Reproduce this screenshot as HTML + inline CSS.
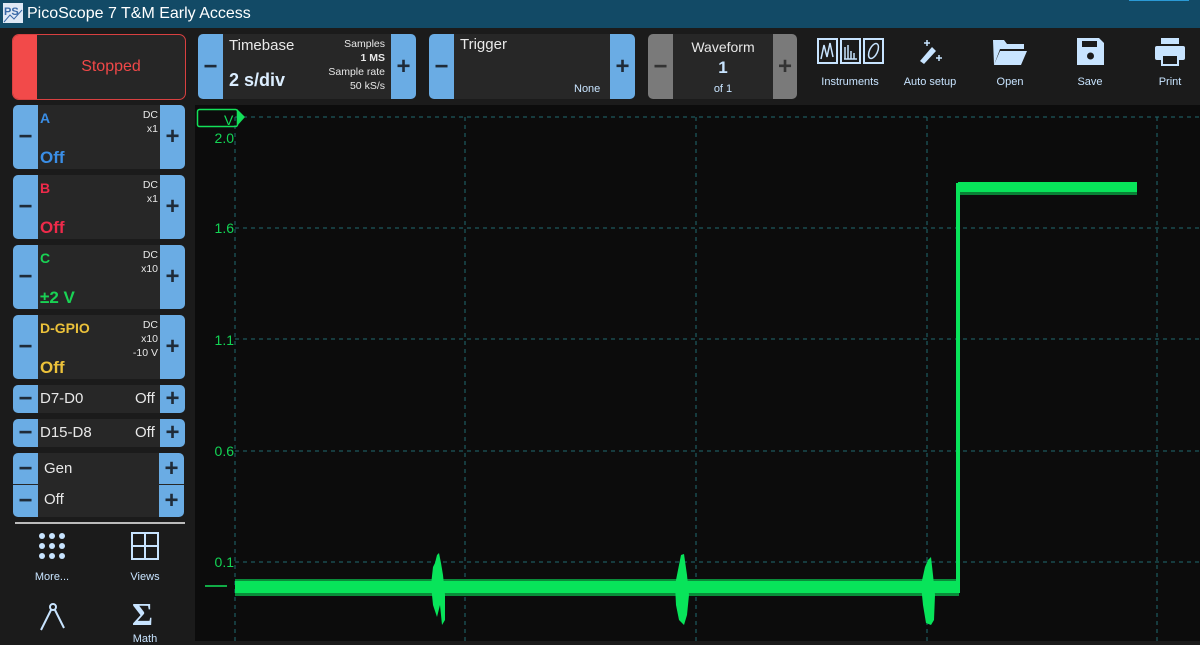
<!DOCTYPE html>
<html><head><meta charset="utf-8"><style>
*{box-sizing:border-box;margin:0;padding:0}
body{width:1200px;height:641px;overflow:hidden;background:#1b1b1b;font-family:"Liberation Sans",sans-serif;color:#e8e8e8;position:relative}
.a{position:absolute}
.title{left:0;top:0;width:1200px;height:28px;background:#124a66}
.btn{position:absolute;background:#6aace4;color:#1f2b38;display:flex;align-items:center;justify-content:center;font-size:24px;font-weight:bold}
.card{position:absolute;background:#272727;border-radius:5px;overflow:hidden}
.lbl{position:absolute;font-size:11px;color:#c8e4ff;text-align:center}
</style></head><body>
<div class="a title"></div>
<div class="a" style="left:1129px;top:0;width:60px;height:1px;background:#2a9ad6"></div>
<svg class="a" style="left:2px;top:2px" width="22" height="22"><rect x="1" y="1" width="20" height="20" fill="#dfe9f5"/><text x="2" y="13" font-size="11" font-weight="bold" fill="#3a6aa8" font-family="Liberation Sans">PS</text><path d="M2 20 L8 13 L12 17 L20 8" stroke="#3a6aa8" fill="none"/></svg>
<div class="a" style="left:27px;top:5px;font-size:16px;color:#fff">PicoScope 7 T&amp;M Early Access</div>

<div class="a" style="left:12px;top:34px;width:174px;height:66px;border:1px solid #d84040;border-radius:7px;background:#262626;overflow:hidden">
<div class="a" style="left:0;top:0;width:24px;height:64px;background:#f24a4a"></div>
<div class="a" style="left:24px;top:23px;width:148px;text-align:center;color:#f04848;font-size:16px">Stopped</div></div>

<div class="card" style="left:198px;top:34px;width:218px;height:65px">
<div class="btn" style="left:0;top:0;width:25px;height:65px">−</div>
<div class="btn" style="left:193px;top:0;width:25px;height:65px">+</div>
<div class="a" style="left:31px;top:3px;font-size:15px">Timebase</div>
<div class="a" style="left:31px;top:36px;font-size:18px;font-weight:bold;color:#dceeff">2 s/div</div>
<div class="a" style="left:110px;top:3px;width:77px;text-align:right;font-size:10.5px;line-height:14px">Samples<br><b>1 MS</b><br>Sample rate<br>50 kS/s</div></div>

<div class="card" style="left:429px;top:34px;width:206px;height:65px">
<div class="btn" style="left:0;top:0;width:25px;height:65px">−</div>
<div class="btn" style="left:181px;top:0;width:25px;height:65px">+</div>
<div class="a" style="left:31px;top:2px;font-size:15px">Trigger</div>
<div class="a" style="left:145px;top:49px;font-size:11px;color:#c8e4ff">None</div></div>

<div class="card" style="left:648px;top:34px;width:149px;height:65px">
<div class="btn" style="left:0;top:0;width:25px;height:65px;background:#7a7a7a;color:#333">−</div>
<div class="btn" style="left:125px;top:0;width:24px;height:65px;background:#7a7a7a;color:#333">+</div>
<div class="a" style="left:25px;top:5px;width:100px;text-align:center;font-size:14px">Waveform</div>
<div class="a" style="left:25px;top:24px;width:100px;text-align:center;font-size:17px;font-weight:bold;color:#c8e4ff">1</div>
<div class="a" style="left:25px;top:49px;width:100px;text-align:center;font-size:11px;color:#c8e4ff">of 1</div></div>

<svg class="a" style="left:817px;top:37px" width="68" height="30" fill="none" stroke="#c8e4ff" stroke-width="2">
<rect x="1" y="2" width="19" height="24"/><rect x="24" y="2" width="19" height="24"/><rect x="47" y="2" width="19" height="24"/>
<path d="M4 22 L7 8 L10 20 L13 6 L16 20" stroke-width="1.5"/><path d="M28 22 V10 M31 22 V8 M34 22 V14 M37 22 V16 M27 22 H40" stroke-width="1.5"/><ellipse cx="56.5" cy="14" rx="4" ry="8" transform="rotate(25 56.5 14)" stroke-width="1.5"/></svg>
<div class="lbl" style="left:810px;top:76px;width:80px">Instruments</div>
<svg class="a" style="left:915px;top:38px" width="30" height="30"><path d="M7 26 L19 12 L23 16 L11 29 Z" fill="#c8e4ff" transform="translate(-2,-3)"/><path d="M12 2 V8 M9 5 H15 M24 17 V23 M21 20 H27" stroke="#c8e4ff" stroke-width="1.5"/></svg>
<div class="lbl" style="left:890px;top:76px;width:80px">Auto setup</div>
<svg class="a" style="left:992px;top:37px" width="36" height="30"><path d="M1 3 H12 L15 7 H32 V12 H8 L2 28 Z M8 14 H35 L29 28 H2 Z" fill="#c8e4ff"/></svg>
<div class="lbl" style="left:970px;top:76px;width:80px">Open</div>
<svg class="a" style="left:1076px;top:37px" width="30" height="30"><path d="M1 1 H23 L28 6 V28 H1 Z" fill="#c8e4ff"/><rect x="6" y="4" width="15" height="6" fill="#1b1b1b"/><circle cx="14.5" cy="19" r="3.5" fill="#1b1b1b"/></svg>
<div class="lbl" style="left:1050px;top:76px;width:80px">Save</div>
<svg class="a" style="left:1154px;top:37px" width="32" height="30"><rect x="7" y="1" width="18" height="6" fill="#c8e4ff"/><rect x="1" y="9" width="30" height="14" rx="2" fill="#c8e4ff"/><rect x="8" y="18" width="16" height="10" fill="#1b1b1b" stroke="#c8e4ff" stroke-width="2"/></svg>
<div class="lbl" style="left:1130px;top:76px;width:80px">Print</div>

<div class="card" style="left:13px;top:105px;width:172px;height:64px"><div class="btn" style="left:0;top:0;width:25px;height:64px">−</div><div class="btn" style="left:147px;top:0;width:25px;height:64px">+</div>
<div class="a" style="left:27px;top:5px;font-size:14px;font-weight:bold;color:#3a8ee6">A</div><div class="a" style="left:27px;top:43px;font-size:17px;font-weight:bold;color:#3a8ee6">Off</div><div class="a" style="left:110px;top:3px;width:35px;text-align:right;font-size:10.5px;line-height:14px">DC<br>x1</div></div>
<div class="card" style="left:13px;top:175px;width:172px;height:64px"><div class="btn" style="left:0;top:0;width:25px;height:64px">−</div><div class="btn" style="left:147px;top:0;width:25px;height:64px">+</div>
<div class="a" style="left:27px;top:5px;font-size:14px;font-weight:bold;color:#ee2a4a">B</div><div class="a" style="left:27px;top:43px;font-size:17px;font-weight:bold;color:#ee2a4a">Off</div><div class="a" style="left:110px;top:3px;width:35px;text-align:right;font-size:10.5px;line-height:14px">DC<br>x1</div></div>
<div class="card" style="left:13px;top:245px;width:172px;height:64px"><div class="btn" style="left:0;top:0;width:25px;height:64px">−</div><div class="btn" style="left:147px;top:0;width:25px;height:64px">+</div>
<div class="a" style="left:27px;top:5px;font-size:14px;font-weight:bold;color:#19d254">C</div><div class="a" style="left:27px;top:43px;font-size:17px;font-weight:bold;color:#19d254">±2 V</div><div class="a" style="left:110px;top:3px;width:35px;text-align:right;font-size:10.5px;line-height:14px">DC<br>x10</div></div>
<div class="card" style="left:13px;top:315px;width:172px;height:64px"><div class="btn" style="left:0;top:0;width:25px;height:64px">−</div><div class="btn" style="left:147px;top:0;width:25px;height:64px">+</div>
<div class="a" style="left:27px;top:5px;font-size:14px;font-weight:bold;color:#ecc23a">D-GPIO</div><div class="a" style="left:27px;top:43px;font-size:17px;font-weight:bold;color:#ecc23a">Off</div><div class="a" style="left:100px;top:3px;width:45px;text-align:right;font-size:10.5px;line-height:14px">DC<br>x10<br>-10 V</div></div>

<div class="card" style="left:13px;top:385px;width:172px;height:28px"><div class="btn" style="left:0;top:0;width:25px;height:28px">−</div><div class="btn" style="left:147px;top:0;width:25px;height:28px">+</div>
<div class="a" style="left:27px;top:5px;font-size:15px">D7-D0</div><div class="a" style="left:122px;top:5px;font-size:15px">Off</div></div>
<div class="card" style="left:13px;top:419px;width:172px;height:28px"><div class="btn" style="left:0;top:0;width:25px;height:28px">−</div><div class="btn" style="left:147px;top:0;width:25px;height:28px">+</div>
<div class="a" style="left:27px;top:5px;font-size:15px">D15-D8</div><div class="a" style="left:122px;top:5px;font-size:15px">Off</div></div>
<div class="card" style="left:13px;top:453px;width:171px;height:64px"><div class="btn" style="left:0;top:0;width:25px;height:31px">−</div><div class="btn" style="left:146px;top:0;width:25px;height:31px">+</div>
<div class="btn" style="left:0;top:32px;width:25px;height:32px">−</div><div class="btn" style="left:146px;top:32px;width:25px;height:32px">+</div>
<div class="a" style="left:31px;top:7px;font-size:15px">Gen</div><div class="a" style="left:31px;top:38px;font-size:15px">Off</div></div>
<div class="a" style="left:15px;top:522px;width:170px;height:2px;background:#bbb"></div>

<svg class="a" style="left:38px;top:533px" width="28" height="28" fill="#c8e4ff"><circle cx="4" cy="3" r="3"/><circle cx="14" cy="3" r="3"/><circle cx="24" cy="3" r="3"/><circle cx="4" cy="13" r="3"/><circle cx="14" cy="13" r="3"/><circle cx="24" cy="13" r="3"/><circle cx="4" cy="23" r="3"/><circle cx="14" cy="23" r="3"/><circle cx="24" cy="23" r="3"/></svg>
<div class="lbl" style="left:12px;top:571px;width:80px">More...</div>
<svg class="a" style="left:131px;top:532px" width="28" height="28" fill="none" stroke="#c8e4ff" stroke-width="2"><rect x="1" y="1" width="26" height="26"/><path d="M14 1 V27 M1 14 H27"/></svg>
<div class="lbl" style="left:105px;top:571px;width:80px">Views</div>
<svg class="a" style="left:38px;top:602px" width="28" height="30" fill="none" stroke="#c8e4ff" stroke-width="2"><circle cx="15" cy="5" r="3"/><path d="M13 8 L3 28 M17 8 L26 26"/></svg>
<div class="a" style="left:132px;top:596px;font-size:32px;font-weight:bold;color:#c8e4ff;font-family:'Liberation Serif',serif">Σ</div>
<div class="lbl" style="left:105px;top:633px;width:80px">Math</div>

<svg class="a" style="left:195px;top:105px" width="1005" height="536">
<rect width="1005" height="536" fill="#0c0c0c"/>
<g stroke="#1f6a70" stroke-width="1" stroke-dasharray="4,4">
<path d="M40 12 V536 M270 12 V536 M501 12 V536 M732 12 V536 M962 12 V536"/>
<path d="M40 12 H1005 M40 123 H1005 M40 234 H1005 M40 346 H1005 M40 457 H1005"/>
</g>
<rect x="2.5" y="4.5" width="40" height="17" rx="2" fill="none" stroke="#13e059" stroke-width="1.5"/>
<path d="M42 4 L50 12 L42 21 Z" fill="#13e059"/>
<text x="29" y="20" font-size="14" fill="#13e059" font-family="Liberation Sans">V</text>
<g fill="#13d454" font-size="14" font-family="Liberation Sans" text-anchor="end">
<text x="39" y="38">2.0</text><text x="39" y="128">1.6</text><text x="39" y="240">1.1</text><text x="39" y="351">0.6</text><text x="39" y="462">0.1</text></g>
<path d="M10 481 H32" stroke="#13e059" stroke-width="1.5"/>
<g fill="#08e45a">
<rect x="40" y="476" width="724" height="12"/>
<rect x="40" y="474" width="724" height="2" opacity="0.6"/>
<rect x="40" y="488" width="724" height="3" opacity="0.6"/>
<path d="M236 480 L238 462 L240 458 L242 450 L244 448 L246 458 L248 470 L250 490 L250 515 L247 520 L245 500 L242 512 L238 500 Z"/>
<path d="M480 480 L483 465 L486 450 L489 449 L492 470 L494 490 L492 510 L489 520 L484 515 L481 500 Z"/>
<path d="M726 480 L730 462 L733 455 L736 452 L738 470 L740 490 L739 515 L736 520 L731 518 L728 500 Z"/>
<rect x="761" y="78" width="4" height="410"/>
<rect x="763" y="77" width="179" height="10"/>
<rect x="763" y="87" width="179" height="3" opacity="0.55"/>
</g>
</svg>
</body></html>
